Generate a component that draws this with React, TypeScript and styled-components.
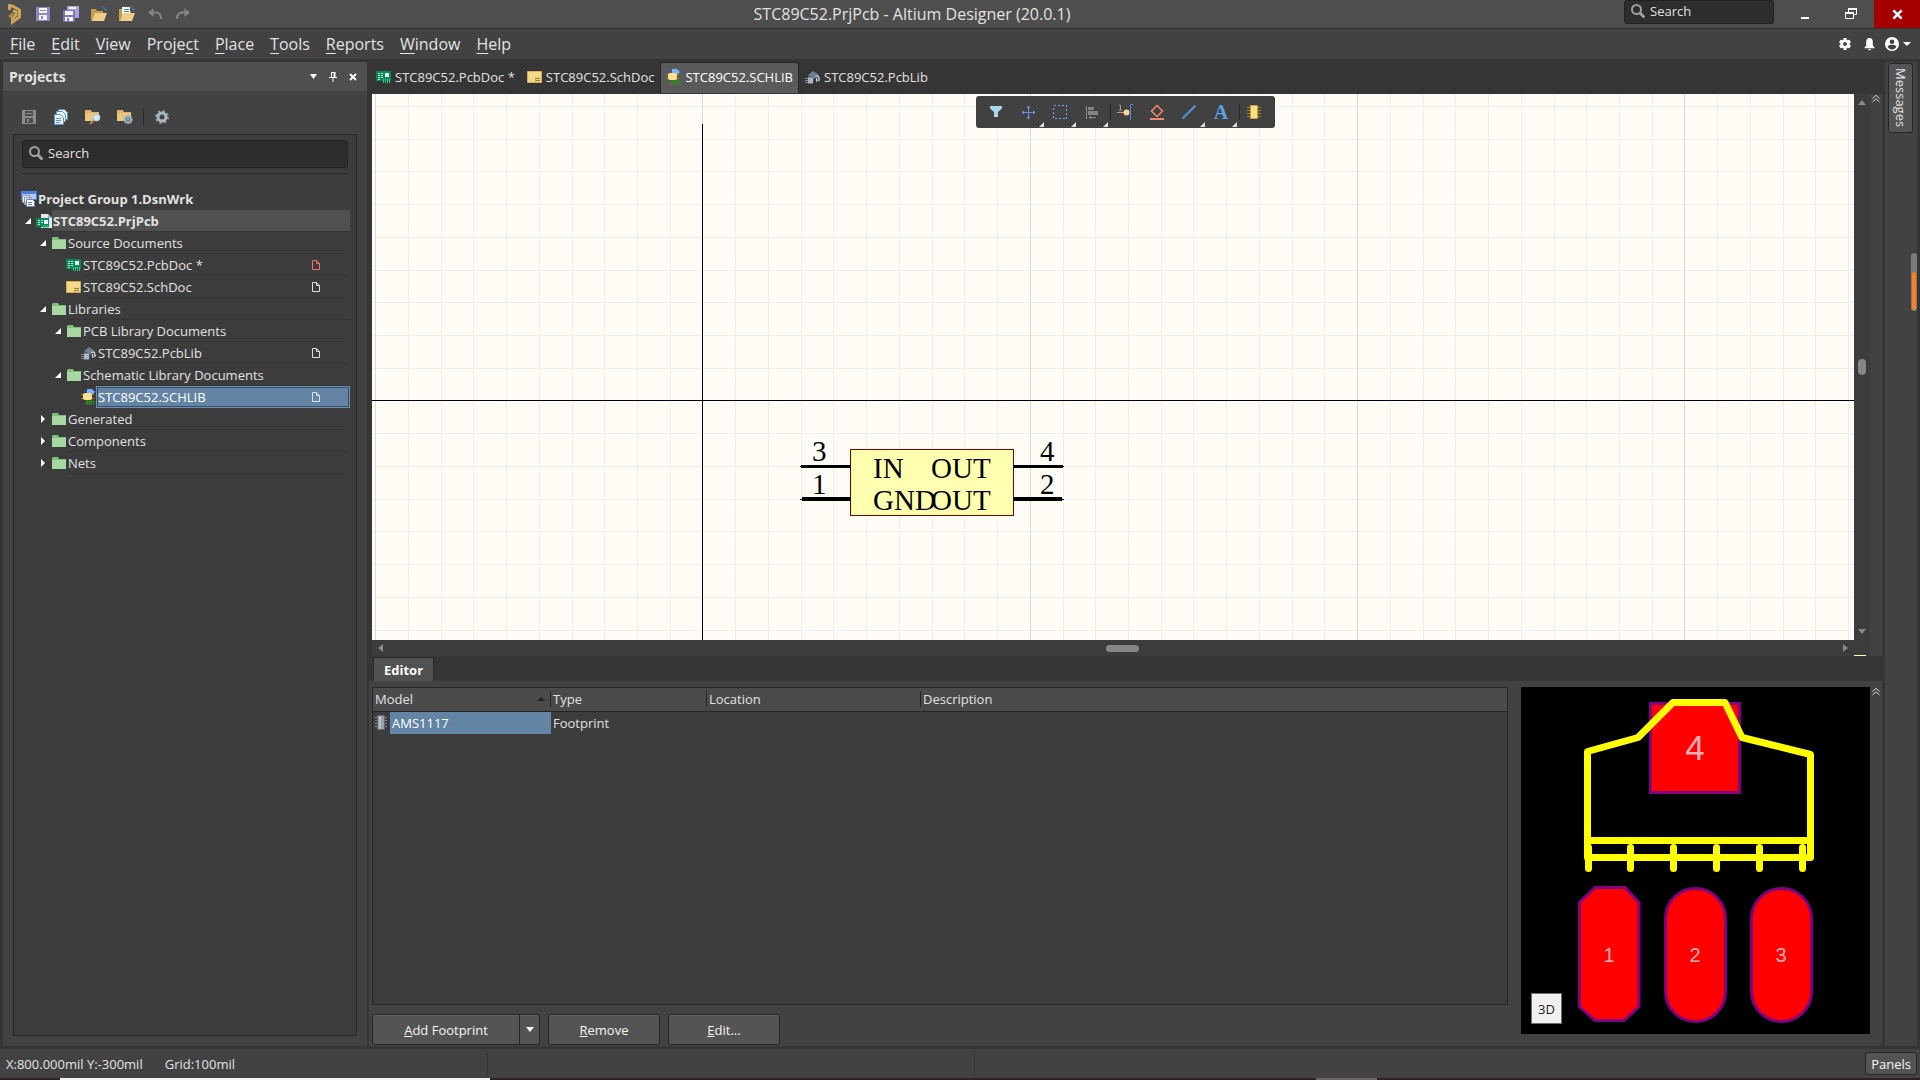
import React from "react";
import styled, { createGlobalStyle } from "styled-components";

const Global = createGlobalStyle`
  *, *::before, *::after { box-sizing: border-box; }
  body { margin: 0; background: #353535; }
  body, button, input { font-family: "Open Sans", "Noto Sans", sans-serif; font-size: 13px; color: #e2e2e2; }
  button { border: 0; padding: 0; background: none; line-height: 20px; }
  a { color: inherit; text-decoration: none; }
  ul { list-style: none; margin: 0; padding: 0; }
  h1, h2 { margin: 0; }
  svg { display: block; flex: none; }
`;

const Window = styled.div`
  display: flex;
  flex-direction: column;
  height: 100vh;
  overflow: hidden;
`;

/* ---------- title and menu ---------- */

const TitleBar = styled.header`
  display: flex;
  align-items: center;
  height: 29px;
  background: #4e4e4e;
  border-bottom: 1px solid #323232;
`;
const QuickBar = styled.div`
  display: flex;
  align-items: center;
  gap: 12px;
  width: 200px;
  padding-left: 7px;
`;
const IconButton = styled.button`
  display: flex;
  align-items: center;
  justify-content: center;
  width: 16px;
  height: 20px;
`;
const AppTitle = styled.h1`
  flex: 1;
  text-align: center;
  font-size: 16px;
  font-weight: 400;
  line-height: 20px;
`;
const SearchBox = styled.label<{ $tall?: boolean }>`
  display: flex;
  align-items: center;
  gap: 5px;
  width: ${(p) => (p.$tall ? "auto" : "150px")};
  height: ${(p) => (p.$tall ? "28px" : "24px")};
  padding: 0 0 2px 6px;
  background: #2d2d2d;
  border: 1px solid #222;
  border-radius: 3px;
  align-self: ${(p) => (p.$tall ? "stretch" : "flex-start")};
  input {
    flex: 1;
    min-width: 0;
    padding: 0;
    border: 0;
    outline: 0;
    background: none;
  }
  input::placeholder { color: #e2e2e2; opacity: 1; }
`;
const WindowButtons = styled.div`
  display: flex;
  align-self: stretch;
  padding-left: 8px;
`;
const WindowButton = styled.button<{ $close?: boolean }>`
  display: flex;
  align-items: center;
  justify-content: center;
  width: 46px;
  height: 28px;
  background: ${(p) => (p.$close ? "#a50000" : "transparent")};
`;
const MenuBar = styled.nav`
  display: flex;
  align-items: center;
  gap: 16px;
  height: 30px;
  padding: 0 9px 0 10px;
  background: #424242;
  font-size: 16px;
  line-height: 24px;
  u { text-underline-offset: 3px; text-decoration-thickness: 1px; }
`;
const MenuTools = styled.div`
  display: flex;
  gap: 8px;
  margin-left: auto;
`;
const AccountButton = styled.button`
  display: flex;
  align-items: center;
  gap: 4px;
`;

/* ---------- work area ---------- */

const Work = styled.div`
  display: flex;
  flex: 1;
  min-height: 0;
  padding: 3px;
`;
const Side = styled.aside`
  display: flex;
  flex-direction: column;
  width: 364px;
  background: #424242;
`;
const SideHead = styled.div`
  display: flex;
  align-items: center;
  height: 29px;
  padding: 0 6px;
  background: #4f4f4f;
  h2 { flex: 1; font-size: 14px; line-height: 20px; }
`;
const HeadTools = styled.div`
  display: flex;
  gap: 4px;
`;
const SideTools = styled.div`
  display: flex;
  align-items: center;
  gap: 16px;
  height: 43px;
  padding: 9px 18px 0;
`;
const ToolPair = styled.div`
  display: flex;
  align-items: center;
  gap: 10px;
`;
const Divider = styled.i`
  width: 1px;
  height: 16px;
  background: #262626;
`;
const TreeBox = styled.div`
  display: flex;
  flex-direction: column;
  flex: 1;
  margin: 0 10px 10px;
  padding: 5px 6px 0 2px;
  background: #3c3c3c;
  border: 1px solid #262626;
`;
const TreeSearch = styled.div`
  display: flex;
  flex-direction: column;
  margin: 0 2px 14px 6px;
  padding-bottom: 5px;
  border-bottom: 1px solid #2b2b2b;
`;
const TreeRow = styled.li<{ $depth: number }>`
  display: flex;
  height: 22px;
  padding-left: ${(p) => p.$depth * 15 + 4}px;
`;
const TreeIcon = styled.span`
  display: flex;
  align-items: center;
  justify-content: center;
  width: 17px;
`;
const Arrow = styled.span`
  display: flex;
  align-items: center;
  justify-content: center;
  width: 15px;
  padding-left: 1px;
`;
const TreeLabel = styled.a<{ $tone?: "project" | "selected" | "group" }>`
  display: flex;
  flex: 1;
  align-items: center;
  padding: 0 30px 0 1px;
  line-height: 20px;
  font-weight: ${(p) => (p.$tone === "project" || p.$tone === "group" ? 700 : 400)};
  border-bottom: 1px solid ${(p) => (p.$tone === "group" ? "transparent" : "#353535")};
  background: ${(p) => (p.$tone === "project" ? "#505050" : "transparent")};
  ${(p) =>
    p.$tone === "selected" &&
    "background:#6384a4; border:1px solid #6b8fb2; box-shadow: inset 0 0 0 1px #3f4f60; padding: 0 29px 0 1px; margin-left:-1px; color:#fff;"}
  span { flex: 1; }
`;
const Center = styled.main`
  display: flex;
  flex: 1;
  flex-direction: column;
  min-width: 0;
  padding-left: 2px;
`;
const Tabs = styled.div`
  display: flex;
  height: 32px;
  padding-left: 1px;
`;
const Tab = styled.button<{ $active?: boolean }>`
  display: flex;
  align-items: center;
  gap: 4px;
  height: 31px;
  padding: 0 5px 2px;
  border: 1px solid ${(p) => (p.$active ? "#262626" : "transparent")};
  border-bottom: 0;
  border-radius: 3px 3px 0 0;
  background: ${(p) => (p.$active ? "#5a5a5a" : "transparent")};
  color: ${(p) => (p.$active ? "#fff" : "#e2e2e2")};
`;
const Sheet = styled.section`
  display: grid;
  grid-template-columns: 1fr 16px 12px;
  grid-template-rows: 1fr 16px;
  flex: 1;
  min-height: 0;
  padding-left: 3px;
`;
const Canvas = styled.div`
  position: relative;
  overflow: hidden;
  min-width: 0;
  background: #fffcf6;
`;
const FloatBar = styled.div`
  position: absolute;
  top: 2px;
  left: calc(50% - 137px);
  display: flex;
  align-items: center;
  height: 32px;
  padding: 0 7px 0 6px;
  gap: 4px;
  background: #414141;
  border-radius: 3px;
`;
const FloatButton = styled.button<{ $more?: boolean }>`
  position: relative;
  display: flex;
  align-items: center;
  justify-content: center;
  width: 28px;
  height: 32px;
  &::after {
    content: "";
    display: ${(p) => (p.$more ? "block" : "none")};
    position: absolute;
    right: -2px;
    bottom: 1px;
    border-left: 5px solid transparent;
    border-bottom: 5px solid #dedede;
  }
`;
const Letter = styled.span`
  font-family: "Liberation Serif", serif;
  font-size: 20px;
  font-weight: 700;
  line-height: 24px;
  color: #5f9fe8;
`;
const FloatGroup = styled.div`
  display: flex;
  gap: 4px;
  & + & { border-left: 1px solid #262626; height: 16px; align-items: center; }
`;
const ScrollY = styled.div`
  display: flex;
  flex-direction: column;
  align-items: center;
  justify-content: space-between;
  padding: 6px 0;
  background: #3c3c3c;
`;
const ScrollX = styled.div`
  display: flex;
  align-items: center;
  justify-content: space-between;
  padding: 0 6px;
  background: #3c3c3c;
`;
const Thumb = styled.i<{ $w: number; $h: number; $scrolled?: number }>`
  width: ${(p) => p.$w}px;
  height: ${(p) => p.$h}px;
  margin-left: ${(p) => p.$scrolled ?? 0}px;
  border-radius: 4px;
  background: #868686;
`;
const Corner = styled.div`
  display: flex;
  align-items: flex-end;
  background: #3c3c3c;
  i { width: 12px; height: 1px; background: #ffffb0; }
`;
const Gutter = styled.div`
  display: flex;
  justify-content: center;
  background: #424242;
`;

/* ---------- model editor ---------- */

const EditorTabs = styled.div`
  display: flex;
  height: 25px;
  padding: 1px 12px 0 4px;
`;
const EditorTab = styled.button`
  padding: 1px 10px 0;
  background: #515151;
  border: 1px solid #2a2a2a;
  border-bottom: 0;
  font-weight: 700;
  color: #fff;
`;
const EditorPanel = styled.section`
  display: flex;
  height: 365px;
  padding: 6px 0 0 3px;
  background: #424242;
`;
const Models = styled.div`
  display: flex;
  flex: 1;
  flex-direction: column;
  min-width: 0;
`;
const TableBox = styled.div`
  height: 318px;
  background: #3c3c3c;
  border: 1px solid #262626;
`;
const Table = styled.table`
  width: 100%;
  border-collapse: collapse;
  table-layout: fixed;
  line-height: 20px;
  th, td { padding: 0 2px; font-weight: 400; text-align: left; }
  thead tr { height: 23px; background: #4a4a4a; border-bottom: 1px solid #262626; }
  tbody tr { height: 22px; }
`;
const HeadCell = styled.div<{ $last?: boolean }>`
  display: flex;
  align-items: center;
  justify-content: space-between;
  height: 16px;
  margin-right: -2px;
  padding-right: 5px;
  border-right: 1px solid ${(p) => (p.$last ? "transparent" : "#262626")};
`;
const ModelCell = styled.div`
  display: flex;
  align-items: center;
  gap: 3px;
  height: 22px;
  margin-right: -2px;
  span { flex: 1; padding-left: 2px; background: #6384a4; color: #fff; line-height: 22px; }
`;
const Buttons = styled.div`
  display: flex;
  gap: 8px;
  padding-top: 9px;
`;
const PushButton = styled.button<{ $w: number; $side?: "left" | "right" }>`
  display: flex;
  align-items: center;
  justify-content: center;
  width: ${(p) => p.$w}px;
  height: 31px;
  background: #545454;
  border: 1px solid #262626;
  border-radius: ${(p) => (p.$side === "left" ? "3px 0 0 3px" : p.$side === "right" ? "0 3px 3px 0" : "3px")};
  border-left-width: ${(p) => (p.$side === "right" ? 0 : 1)}px;
  box-shadow: inset 0 1px 0 #656565;
  color: #f4f4f4;
`;
const Split = styled.div`
  display: flex;
`;
const Preview = styled.div`
  position: relative;
  width: 349px;
  height: 347px;
  margin-left: 13px;
  background: #000;
`;
const View3D = styled.button`
  position: absolute;
  left: 10px;
  bottom: 10px;
  width: 31px;
  height: 31px;
  background: #f0f0f0;
  border: 1px solid #707070;
  color: #1a1a1a;
`;
const PanelGutter = styled.div`
  display: flex;
  justify-content: center;
  width: 12px;
`;

/* ---------- right rail and status ---------- */

const Rail = styled.aside`
  display: flex;
  flex-direction: column;
  align-items: flex-end;
  gap: 120px;
  width: 32px;
  margin-left: 3px;
  padding-top: 1px;
  background: #424242;
`;
const MessagesTab = styled.button`
  display: flex;
  align-items: center;
  justify-content: center;
  width: 25px;
  height: 70px;
  margin-right: 4px;
  writing-mode: vertical-rl;
  background: #545454;
  border: 1px solid #262626;
  border-radius: 3px;
`;
const Meter = styled.div`
  width: 6px;
  height: 58px;
  padding: 19px 1px 0;
  border-radius: 3px;
  background: #7b7b7b;
  i { display: block; height: 38px; border-radius: 2px; background: #ff7f1c; }
`;
const StatusBar = styled.footer`
  display: grid;
  grid-template-columns: 488px 487px 1fr auto;
  align-items: center;
  height: 29px;
  padding-right: 3px;
  background: #424242;
  line-height: 20px;
`;
const StatusCell = styled.div`
  display: flex;
  align-items: center;
  gap: 22px;
  height: 24px;
  padding-left: 6px;
  border-right: 1px solid #353535;
`;
const PanelsButton = styled.button`
  grid-column: 4;
  height: 23px;
  padding: 0 5px;
  background: #545454;
  border: 1px solid #262626;
  border-radius: 3px;
  color: #f4f4f4;
`;
const Taskbar = styled.div`
  display: grid;
  grid-template-columns: 60px 430px 826px 61px 1fr;
  height: 2px;
  background: #2a2224;
  i:nth-child(1) { grid-column: 2; background: #f4f4f4; }
  i:nth-child(2) { grid-column: 4; background: #6a6466; }
`;

/* ---------- icons ---------- */

const Logo = () => (
  <svg width="16" height="22" viewBox="0 0 16 22" fill="none" strokeWidth="3">
    <path d="M2.500 1v6M2.500 3h3l7 4v7l-7 5v-4l3.500-3V9L6 7.500" stroke="#c9a55b" />
    <path d="M2 14l4.500-3.500" stroke="#a8853e" />
  </svg>
);
const Floppy = ({ c = "#8d87c8", l = "#f5f5ff" }) => (
  <svg width="14" height="14" viewBox="0 0 14 14">
    <path d="M0 0h14v14H0z" fill={c} />
    <path d="M3 1h8v5H3zM3 8h8v5H3z" fill={l} />
    <path d="M5 9h2v3H5z" fill={c} />
    <path d="M4 3.500h6" stroke={c} />
  </svg>
);
const FloppyAll = () => (
  <svg width="16" height="16" viewBox="0 0 16 16">
    <path d="M4 0h12v12H4z" fill="#a8a2dc" />
    <path d="M6 1h7v2H6z" fill="#f5f5ff" />
    <path d="M0 4h12v12H0z" fill="#7d76bd" />
    <path d="M2 5h8v4H2zM2 11h8v4H2z" fill="#f5f5ff" />
    <path d="M4 12h2v3H4z" fill="#7d76bd" />
  </svg>
);
const OpenFolder = ({ page }: { page?: boolean }) => (
  <svg width="16" height="16" viewBox="0 0 16 16">
    <path d="M0 3h5l1 2h6v3H4L1 15H0z" fill="#c99a52" />
    {page && <path d="M3 1h8v9H3z" fill="#f4f8fc" />}
    {page && <path d="M5 3.500h5M5 5.500h5" stroke="#4f88b8" />}
    <path d="M4 7h12l-3 8H1z" fill="#f0cd86" />
    <path d="M10 1c3-1 4 0 4.500 3M12.500 3l2 1.500L16 3" fill="none" stroke="#3f7fae" />
  </svg>
);
const Turn = ({ flip }: { flip?: boolean }) => (
  <svg width="14" height="12" viewBox="0 0 14 12" fill="none" stroke="#858585" strokeWidth="2">
    <g transform={flip ? "matrix(-1 0 0 1 14 0)" : undefined}>
      <path d="M3 4.500h5c3 0 5 2.500 5 6.500" />
      <path d="M5.500 0v9L0 4.500z" fill="#858585" stroke="none" />
    </g>
  </svg>
);
const Magnifier = () => (
  <svg width="14" height="14" viewBox="0 0 14 14" fill="none" stroke="#a0a0a0">
    <circle cx="5.500" cy="5.500" r="4.500" strokeWidth="2" />
    <path d="M9 9l4.500 4.500" strokeWidth="3" />
  </svg>
);
const Gear = () => (
  <svg width="14" height="14" viewBox="0 0 14 14">
    <g fill="#fff">
      <circle cx="7" cy="7" r="4.600" />
      {[0, 60, 120].map((a) => (
        <rect key={a} x="5.400" y="1" width="3.200" height="12" rx="0.500" transform={`rotate(${a} 7 7)`} />
      ))}
    </g>
    <circle cx="7" cy="7" r="2" fill="#424242" />
  </svg>
);
const Cog = () => (
  <svg width="14" height="14" viewBox="0 0 14 14">
    <circle cx="7" cy="7" r="6" fill="none" stroke="#8799a6" strokeWidth="2" strokeDasharray="2.300 2.400" />
    <circle cx="7" cy="7" r="4" fill="none" stroke="#a9b7c2" strokeWidth="3" />
  </svg>
);
const Bell = () => (
  <svg width="11" height="14" viewBox="0 0 11 14" fill="#fff">
    <path d="M5.500 1C3 1 2.200 3 2.200 5v3.500L.5 10.500v.8h10v-.8L8.800 8.500V5c0-2-.8-4-3.300-4zM4 12h3l-.7 1.300H4.700z" />
  </svg>
);
const User = () => (
  <svg width="14" height="14" viewBox="0 0 14 14">
    <circle cx="7" cy="7" r="7" fill="#fff" />
    <circle cx="7" cy="4.800" r="2.300" fill="#424242" />
    <path d="M2.500 9.500c1.500-2.300 7.500-2.300 9 0-1 2-2.500 3-4.500 3s-3.500-1-4.500-3z" fill="#424242" />
  </svg>
);
const Caret = ({ dir = "down", c = "#fff", w = 8, h = 4 }) => {
  const d: Record<string, string> = {
    down: `M0 0h${w}L${w / 2} ${h}z`,
    up: `M0 ${h}h${w}L${w / 2} 0z`,
    left: `M${w} 0v${h}L0 ${h / 2}z`,
    right: `M0 0v${h}L${w} ${h / 2}z`,
    corner: `M${w} 0v${h}H0z`,
  };
  return (
    <svg width={w} height={h} viewBox={`0 0 ${w} ${h}`}>
      <path d={d[dir]} fill={c} />
    </svg>
  );
};
const Pin = () => (
  <svg width="8" height="10" viewBox="0 0 8 10" fill="none" stroke="#fff">
    <path d="M2.500 0v5M2 .5h4M0 5.500h8M4 6v4" />
    <path d="M5.500 0v5" strokeWidth="2" />
  </svg>
);
const Cross = ({ size = 8 }) => (
  <svg width={size} height={size} viewBox="0 0 8 8" stroke="#fff" strokeWidth="1.800">
    <path d="M1 1l6 6M7 1L1 7" />
  </svg>
);
const Chevrons = () => (
  <svg width="8" height="9" viewBox="0 0 8 9" fill="none" stroke="#d8d8d8">
    <path d="M.5 4.500L4 1.300 7.500 4.500M.5 8L4 4.800 7.500 8" />
  </svg>
);
const Copies = () => (
  <svg width="16" height="16" viewBox="0 0 16 16" stroke="#5b93c9" fill="#eaf3fb">
    <path d="M5.500.5h6l3 3v7h-9z" />
    <path d="M3.500 2.500h6l3 3v7h-9z" />
    <path d="M1.500 5.500h6l3 3v7h-9z" />
    <path d="M3 9.500h5M3 11.500h5M3 13.500h4" />
  </svg>
);
const FolderTool = ({ gear }: { gear?: boolean }) => (
  <svg width="16" height="16" viewBox="0 0 16 16">
    <path d="M0 1h6l1 2h7v9H0z" fill="#e0b468" />
    <path d="M0 4h14v8H0z" fill="#edc780" />
    {gear ? (
      <g fill="none" stroke="#9db1c0">
        <circle cx="11" cy="10.500" r="3" fill="#52616d" strokeWidth="2" />
        <circle cx="11" cy="10.500" r="4.500" strokeDasharray="1.500 1.500" />
        <circle cx="11" cy="10.500" r="1" fill="#c4d2dc" stroke="none" />
      </g>
    ) : (
      <g>
        <path d="M9 11l-4 4" stroke="#b98b4a" strokeWidth="2" />
        <circle cx="11.500" cy="8.500" r="3.500" fill="#d4e8f8" stroke="#a9c4da" />
      </g>
    )}
  </svg>
);
const Board = () => (
  <svg width="15" height="12" viewBox="0 0 15 12">
    <path d="M0 0h15v10H0z" fill="#0b8a58" />
    <path d="M2 2.500h2M2 4.500h2M2 6.500h2M2 8.500h2M5 2.500h2M5 4.500h2M5 6.500h2" stroke="#bff0d8" />
    <path d="M9 2h4v4H9z" fill="#e9fff5" />
    <path d="M7.500 8v4M9.500 8v4M11.500 8v4M13.500 8v4" stroke="#2fc48a" />
  </svg>
);
const Schematic = () => (
  <svg width="15" height="12" viewBox="0 0 15 12">
    <path d="M.5.5h14v11H.5z" fill="#f3d887" stroke="#d6ac58" />
    <path d="M8.500 6v5" stroke="#c8a75a" />
    <path d="M9 7.500h4M9 9.500h4" stroke="#8d7440" />
  </svg>
);
const SchLib = () => (
  <svg width="15" height="16" viewBox="0 0 15 16">
    <path d="M3 2.500h12" stroke="#2b55b0" />
    <path d="M6 0h5l3 3-3 3H6z" fill="#7fb0ff" />
    <path d="M0 5.500h13M0 9.500h13" stroke="#a77a1c" />
    <rect x="2" y="4" width="9" height="7" rx="2" fill="#ffdf8a" />
    <path d="M4 12.500h10M4 14.500h10M6.500 11v5M8.500 11v5M10.500 11v5" stroke="#2d8a1e" />
  </svg>
);
const PcbLib = () => (
  <svg width="15" height="13" viewBox="0 0 15 13">
    <path d="M3 4l5-4 6 4-5 4z" fill="#6b8092" />
    <path d="M3 4l6 3v4L3 8z" fill="#4d5c69" />
    <path d="M10.500 5.500c2.500-1 3.500 0 3.500 2.500v2M11.500 7l.5 4" stroke="#d5dde4" strokeWidth="1.300" fill="none" />
    <path d="M3 6.500h5v6H3z" fill="#a9b5bf" />
    <path d="M0 7.500h3M0 9.500h3M0 11.500h3" stroke="#7d8b96" />
  </svg>
);
const Folder = () => (
  <svg width="14" height="12" viewBox="0 0 14 12">
    <path d="M1 0h5l1 2h7v10H0V1z" fill="#7fbf7f" />
    <path d="M0 3h14v9H0z" fill="#a8d8a2" />
  </svg>
);
const Group = () => (
  <svg width="16" height="16" viewBox="0 0 16 16">
    <path d="M.5.5h15v8H.5z" fill="#b9cdf0" stroke="#4a78d0" />
    <path d="M0 0h16v3H0z" fill="#4a7fe0" />
    <path d="M1.500 4.500h7v7h-7zM3.500 6.500h7v7h-7z" fill="#e8eef8" stroke="#8798b8" />
    <path d="M5.500 8.500h6l2 2v5h-8z" fill="#f6f9ff" stroke="#7387ad" />
    <path d="M7 11.500h4M7 13.500h4" stroke="#6d83ab" />
  </svg>
);
const Project = () => (
  <svg width="16" height="16" viewBox="0 0 16 16">
    <path d="M5 1h7l4 4v10H5z" fill="#e6e6f4" />
    <path d="M12 1v4h4z" fill="#a8a8c8" />
    <path d="M0 5h13v9H0z" fill="#0b8a58" />
    <path d="M2 7.500h2M2 9.500h2M2 11.500h2M5 7.500h2M5 9.500h2" stroke="#bff0d8" />
    <path d="M8 7h4v4H8z" fill="#e9fff5" />
    <path d="M7.500 12v3M9.500 12v3M11.500 12v3" stroke="#2fc48a" />
  </svg>
);
const Page = ({ c }: { c: string }) => (
  <svg width="8" height="10" viewBox="0 0 8 10" fill="none" stroke={c}>
    <path d="M.5.5h4l3 3v6H.5zM4.500.5v3h3" />
  </svg>
);
const Chip = () => (
  <svg width="12" height="15" viewBox="0 0 12 15">
    <path d="M0 2.500h12M0 5.500h12M0 8.500h12M0 11.500h12" stroke="#80868c" />
    <path d="M2.500.5h7v14h-7z" fill="#98a0ac" stroke="#5f6670" />
    <path d="M4 1h2v13H4z" fill="#b8bfc8" />
  </svg>
);

/* floating toolbar glyphs, all on a 16 pixel square */
const glyphs: Record<string, React.ReactNode> = {
  Filter: <path d="M2 2h12v2.500L10 8v5H6V8L2 4.500z" fill="#a9d4ea" />,
  Move: <path d="M8.500 2v13M2 8.500h13M7 4l1.500-2L10 4M7 13l1.500 2 1.500-2M4 7L2 8.500 4 10M13 7l2 1.500L13 10" fill="none" stroke="#6c8fe8" />,
  Select: <path d="M1.500 1.500h13v13h-13z" fill="none" stroke="#7fa2f4" strokeDasharray="2 2" shapeRendering="crispEdges" />,
  Align: (
    <g>
      <path d="M2.500 2v13" stroke="#8a8a8a" />
      <path d="M4 3h6v3H4zM4 7h10v4H4z" fill="#858585" />
      <path d="M5 13.500h7M7 12l-2 1.500L7 15" stroke="#8a8a8a" fill="none" />
    </g>
  ),
  Pin: (
    <g>
      <path d="M0 8.500h8" stroke="#c39a4e" />
      <circle cx="9.500" cy="8.500" r="3" fill="#f5d795" />
      <path d="M16 .500h-2.500V16" stroke="#4f86e0" fill="none" />
      <path d="M2 1.500l1.500-.5v5M2 6h3" stroke="#9a9a9a" fill="none" />
    </g>
  ),
  Erase: (
    <g fill="none" stroke="#f08a6a">
      <path d="M8 1.500L13.500 7 8 12.500 2.500 7z" strokeWidth="1.500" />
      <path d="M1 15h14" strokeWidth="2" />
    </g>
  ),
  Line: <path d="M1.500 14.500l13-13" stroke="#4f94e0" strokeWidth="2" />,
  Part: (
    <g>
      <path d="M1 3.500h14M1 6.500h14M1 9.500h14M1 12.500h14" stroke="#a8852c" />
      <path d="M4.500 1.500h7v13h-7z" fill="#ffdf87" stroke="#c69b3c" />
    </g>
  ),
};
const Glyph = ({ name }: { name: string }) =>
  name === "Text" ? (
    <Letter>A</Letter>
  ) : (
    <svg width="16" height="16" viewBox="0 0 16 16">{glyphs[name]}</svg>
  );

/* ---------- drawings ---------- */

const PITCH = 982 / 30;
const ORIGIN = { x: 330, y: 306 };
const COLUMNS = Array.from({ length: 130 }, (_, i) => i - 10);
const ROWS = Array.from({ length: 70 }, (_, i) => i - 9);

const Symbol = () => (
  <svg width="100%" height="100%">
    <g shapeRendering="crispEdges">
      {ROWS.map((n) => (
        <rect key={n} x="0" y={Math.ceil(ORIGIN.y + n * PITCH)} width="100%" height="1" fill={n % 10 ? "#eeeeea" : "#d8d8d4"} />
      ))}
      {COLUMNS.map((n) => (
        <rect key={n} x={Math.ceil(ORIGIN.x + n * PITCH)} y="0" width="1" height="100%" fill={n % 10 ? "#eeeeea" : "#d8d8d4"} />
      ))}
      <rect x={ORIGIN.x} y="30" width="1" height="100%" fill="#000" />
      <rect x="0" y={ORIGIN.y} width="100%" height="1" fill="#000" />
      <rect x="478.500" y="355.500" width="163" height="66" fill="#ffffb0" stroke="#800000" />
      <path d="M429 372.500h50M641 372.500h50" stroke="#000" strokeWidth="3" />
      <path d="M430 405h49M641 405h49" stroke="#000" strokeWidth="4" />
      <path d="M428 405.500h2M690 405.500h2M428 372.500h2M690 372.500h2" stroke="#000" />
    </g>
    <g fontFamily="Liberation Serif, serif" fontSize="29" fill="#000">
      <text x="440" y="367">3</text>
      <text x="440" y="400">1</text>
      <text x="668" y="367">4</text>
      <text x="668" y="400">2</text>
      <text x="501" y="384">IN</text>
      <text x="501" y="416">GND</text>
      <text x="559" y="384">OUT</text>
      <text x="559" y="416">OUT</text>
    </g>
  </svg>
);

const Footprint = () => (
  <svg width="349" height="347" viewBox="0 0 349 347">
    <g fill="#ff0000" stroke="#800080" strokeWidth="3">
      <rect x="129.500" y="16.500" width="89" height="89" />
      <path d="M74 200.500h30l14 15v104l-15 14H74l-15.500-14v-104z" />
      <rect x="144.500" y="201.500" width="60" height="133" rx="30" />
      <rect x="230.500" y="201.500" width="60" height="133" rx="30" />
    </g>
    <g fill="none" stroke="#ffff00" strokeWidth="7" strokeLinecap="round" strokeLinejoin="round">
      <path d="M66.500 170.500V64.500L117 50.500l35-35h52l17 35 68.500 17v103z" />
      <path d="M66.500 153.500h223" />
      {[67.5, 109.5, 152.5, 195.5, 238.5, 281.5].map((x) => (
        <path key={x} d={`M${x} 160.500v21`} />
      ))}
    </g>
    <g fill="#ffb0b0" fontFamily="Liberation Sans, sans-serif" fontSize="20" textAnchor="middle">
      <text x="174" y="73" fontSize="35">4</text>
      <text x="88" y="275">1</text>
      <text x="174" y="275">2</text>
      <text x="260" y="275">3</text>
    </g>
  </svg>
);

/* ---------- data ---------- */

type Node = {
  label: string;
  depth: number;
  icon: React.ReactNode;
  arrow?: "open" | "closed";
  page?: string;
  tone?: "project" | "selected" | "group";
};
const tree: Node[] = [
  { label: "Project Group 1.DsnWrk", depth: 0, icon: <Group />, tone: "group" },
  { label: "STC89C52.PrjPcb", depth: 0, icon: <Project />, arrow: "open", tone: "project" },
  { label: "Source Documents", depth: 1, icon: <Folder />, arrow: "open" },
  { label: "STC89C52.PcbDoc *", depth: 3, icon: <Board />, page: "#f07070" },
  { label: "STC89C52.SchDoc", depth: 3, icon: <Schematic />, page: "#e0e0e0" },
  { label: "Libraries", depth: 1, icon: <Folder />, arrow: "open" },
  { label: "PCB Library Documents", depth: 2, icon: <Folder />, arrow: "open" },
  { label: "STC89C52.PcbLib", depth: 4, icon: <PcbLib />, page: "#e0e0e0" },
  { label: "Schematic Library Documents", depth: 2, icon: <Folder />, arrow: "open" },
  { label: "STC89C52.SCHLIB", depth: 4, icon: <SchLib />, page: "#e0e0e0", tone: "selected" },
  { label: "Generated", depth: 1, icon: <Folder />, arrow: "closed" },
  { label: "Components", depth: 1, icon: <Folder />, arrow: "closed" },
  { label: "Nets", depth: 1, icon: <Folder />, arrow: "closed" },
];
const menus = [
  ["", "F", "ile"], ["", "E", "dit"], ["", "V", "iew"], ["Proje", "c", "t"], ["", "P", "lace"],
  ["", "T", "ools"], ["", "R", "eports"], ["", "W", "indow"], ["", "H", "elp"],
];
const floatGroups: [string, boolean][][] = [
  [["Filter", false], ["Move", true], ["Select", true], ["Align", true]],
  [["Pin", false], ["Erase", false], ["Line", true], ["Text", true]],
  [["Part", false]],
];

export default function App() {
  return (
    <Window>
      <Global />
      <TitleBar>
        <QuickBar>
          <Logo />
          <IconButton aria-label="Save"><Floppy /></IconButton>
          <IconButton aria-label="Save all"><FloppyAll /></IconButton>
          <IconButton aria-label="Open"><OpenFolder /></IconButton>
          <IconButton aria-label="Open project"><OpenFolder page /></IconButton>
          <IconButton aria-label="Undo"><Turn /></IconButton>
          <IconButton aria-label="Redo"><Turn flip /></IconButton>
        </QuickBar>
        <AppTitle>STC89C52.PrjPcb - Altium Designer (20.0.1)</AppTitle>
        <SearchBox>
          <Magnifier />
          <input placeholder="Search" aria-label="Search" />
        </SearchBox>
        <WindowButtons>
          <WindowButton aria-label="Minimize">
            <svg width="8" height="10" viewBox="0 0 8 10"><path d="M0 8h8v2H0z" fill="#fff" /></svg>
          </WindowButton>
          <WindowButton aria-label="Restore">
            <svg width="12" height="12" viewBox="0 0 12 12" fill="none" stroke="#fff">
              <path d="M.5 5.500h8v5h-8zM3.500 5V1.500h8v5H9" />
              <path d="M0 5h9M3 1h9" strokeWidth="2" />
            </svg>
          </WindowButton>
          <WindowButton $close aria-label="Close"><Cross size={11} /></WindowButton>
        </WindowButtons>
      </TitleBar>
      <MenuBar>
        {menus.map(([a, u, b]) => (
          <a key={a + u + b} href="#">{a}<u>{u}</u>{b}</a>
        ))}
        <MenuTools>
          <IconButton aria-label="Preferences"><Gear /></IconButton>
          <IconButton aria-label="Notifications"><Bell /></IconButton>
          <AccountButton aria-label="Account"><User /><Caret /></AccountButton>
        </MenuTools>
      </MenuBar>
      <Work>
        <Side>
          <SideHead>
            <h2>Projects</h2>
            <HeadTools>
              <IconButton aria-label="Panel menu"><Caret w={7} h={5} /></IconButton>
              <IconButton aria-label="Pin panel"><Pin /></IconButton>
              <IconButton aria-label="Close panel"><Cross /></IconButton>
            </HeadTools>
          </SideHead>
          <SideTools>
            <IconButton aria-label="Save document"><Floppy c="#8b8b8b" l="#4c4c4c" /></IconButton>
            <IconButton aria-label="Compile"><Copies /></IconButton>
            <IconButton aria-label="Explore"><FolderTool /></IconButton>
            <ToolPair>
              <IconButton aria-label="Project options"><FolderTool gear /></IconButton>
              <Divider />
              <IconButton aria-label="Settings"><Cog /></IconButton>
            </ToolPair>
          </SideTools>
          <TreeBox>
            <TreeSearch>
              <SearchBox $tall>
                <Magnifier />
                <input placeholder="Search" aria-label="Search projects" />
              </SearchBox>
            </TreeSearch>
            <ul>
              {tree.map((n) => (
                <TreeRow key={n.label} $depth={n.depth}>
                  {n.arrow && (
                    <Arrow>
                      {n.arrow === "open" ? <Caret dir="corner" w={6} h={6} /> : <Caret dir="right" w={4} h={8} />}
                    </Arrow>
                  )}
                  <TreeIcon>{n.icon}</TreeIcon>
                  <TreeLabel href="#" $tone={n.tone}>
                    <span>{n.label}</span>
                    {n.page && <Page c={n.page} />}
                  </TreeLabel>
                </TreeRow>
              ))}
            </ul>
          </TreeBox>
        </Side>
        <Center>
          <Tabs>
            <Tab><Board />STC89C52.PcbDoc *</Tab>
            <Tab><Schematic />STC89C52.SchDoc</Tab>
            <Tab $active><SchLib />STC89C52.SCHLIB</Tab>
            <Tab><PcbLib />STC89C52.PcbLib</Tab>
          </Tabs>
          <Sheet>
            <Canvas>
              <Symbol />
              <FloatBar>
                {floatGroups.map((g) => (
                  <FloatGroup key={g[0][0]}>
                    {g.map(([name, more]) => (
                      <FloatButton key={name} $more={more} aria-label={name}><Glyph name={name} /></FloatButton>
                    ))}
                  </FloatGroup>
                ))}
              </FloatBar>
            </Canvas>
            <ScrollY>
              <Caret dir="up" c="#8a8a8a" w={8} h={5} />
              <Thumb $w={8} $h={16} />
              <Caret c="#8a8a8a" w={8} h={5} />
            </ScrollY>
            <Gutter><Chevrons /></Gutter>
            <ScrollX>
              <Caret dir="left" c="#8a8a8a" w={5} h={8} />
              <Thumb $w={33} $h={7} $scrolled={18} />
              <Caret dir="right" c="#8a8a8a" w={5} h={8} />
            </ScrollX>
            <Corner><i /></Corner>
            <Gutter />
          </Sheet>
          <EditorTabs><EditorTab>Editor</EditorTab></EditorTabs>
          <EditorPanel>
            <Models>
              <TableBox>
                <Table>
                  <colgroup>
                    <col style={{ width: 178 }} />
                    <col style={{ width: 156 }} />
                    <col style={{ width: 214 }} />
                    <col />
                  </colgroup>
                  <thead>
                    <tr>
                      <th><HeadCell>Model<Caret dir="up" c="#262626" w={8} h={4} /></HeadCell></th>
                      <th><HeadCell>Type</HeadCell></th>
                      <th><HeadCell>Location</HeadCell></th>
                      <th><HeadCell $last>Description</HeadCell></th>
                    </tr>
                  </thead>
                  <tbody>
                    <tr>
                      <td><ModelCell><Chip /><span>AMS1117</span></ModelCell></td>
                      <td>Footprint</td>
                      <td />
                      <td />
                    </tr>
                  </tbody>
                </Table>
              </TableBox>
              <Buttons>
                <Split>
                  <PushButton $w={148} $side="left"><span><u>A</u>dd Footprint</span></PushButton>
                  <PushButton $w={20} $side="right" aria-label="More footprint actions"><Caret w={8} h={5} /></PushButton>
                </Split>
                <PushButton $w={112}><span><u>R</u>emove</span></PushButton>
                <PushButton $w={112}><span><u>E</u>dit...</span></PushButton>
              </Buttons>
            </Models>
            <Preview>
              <Footprint />
              <View3D>3D</View3D>
            </Preview>
            <PanelGutter><Chevrons /></PanelGutter>
          </EditorPanel>
        </Center>
        <Rail>
          <MessagesTab>Messages</MessagesTab>
          <Meter><i /></Meter>
        </Rail>
      </Work>
      <StatusBar>
        <StatusCell><span>X:800.000mil Y:-300mil</span><span>Grid:100mil</span></StatusCell>
        <StatusCell />
        <PanelsButton>Panels</PanelsButton>
      </StatusBar>
      <Taskbar><i /><i /></Taskbar>
    </Window>
  );
}
